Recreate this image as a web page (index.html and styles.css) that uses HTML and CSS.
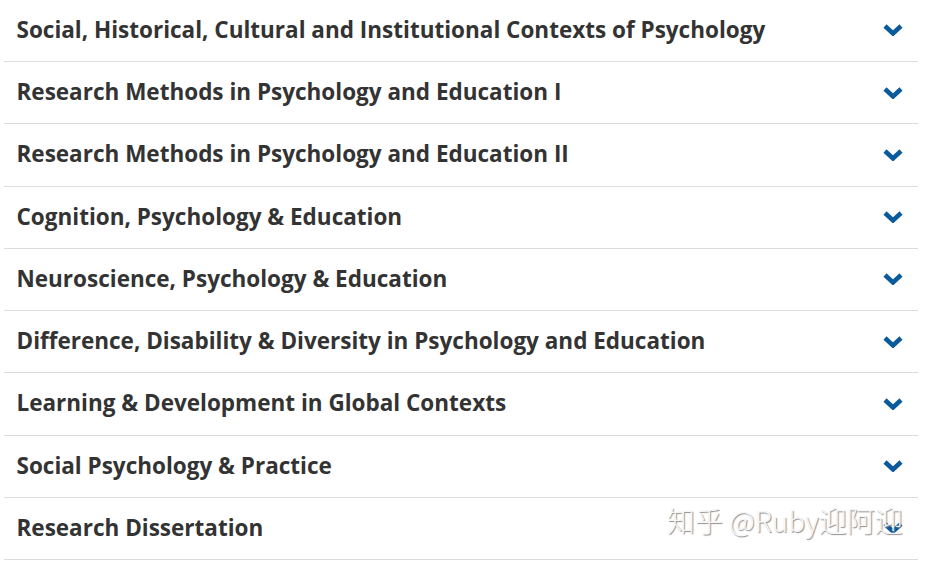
FILE: index.html
```html
<!DOCTYPE html>
<html lang="en">
<head>
<meta charset="utf-8">
<link rel="stylesheet" href="styles.css">
</head>
<body>
<ul class="accordion">
  <li class="row"><span class="title">Social, Historical, Cultural and Institutional Contexts of Psychology</span><svg class="chev" viewBox="0 0 20 12"><polyline points="2,2 10,9.5 18,2"/></svg></li>
  <li class="row"><span class="title">Research Methods in Psychology and Education I</span><svg class="chev" viewBox="0 0 20 12"><polyline points="2,2 10,9.5 18,2"/></svg></li>
  <li class="row"><span class="title">Research Methods in Psychology and Education II</span><svg class="chev" viewBox="0 0 20 12"><polyline points="2,2 10,9.5 18,2"/></svg></li>
  <li class="row"><span class="title">Cognition, Psychology &amp; Education</span><svg class="chev" viewBox="0 0 20 12"><polyline points="2,2 10,9.5 18,2"/></svg></li>
  <li class="row"><span class="title">Neuroscience, Psychology &amp; Education</span><svg class="chev" viewBox="0 0 20 12"><polyline points="2,2 10,9.5 18,2"/></svg></li>
  <li class="row"><span class="title">Difference, Disability &amp; Diversity in Psychology and Education</span><svg class="chev" viewBox="0 0 20 12"><polyline points="2,2 10,9.5 18,2"/></svg></li>
  <li class="row"><span class="title">Learning &amp; Development in Global Contexts</span><svg class="chev" viewBox="0 0 20 12"><polyline points="2,2 10,9.5 18,2"/></svg></li>
  <li class="row"><span class="title">Social Psychology &amp; Practice</span><svg class="chev" viewBox="0 0 20 12"><polyline points="2,2 10,9.5 18,2"/></svg></li>
  <li class="row"><span class="title">Research Dissertation</span><svg class="chev" viewBox="0 0 20 12"><polyline points="2,2 10,9.5 18,2"/></svg></li>
</ul>
<div class="watermark">知乎 @Ruby迎阿迎</div>
</body>
</html>
```
FILE: styles.css
```css
html, body {
  margin: 0;
  padding: 0;
  background: #ffffff;
}
body {
  position: relative;
  width: 928px;
  height: 563px;
  overflow: hidden;
  font-family: "Open Sans", "Noto Sans", sans-serif;
}
.accordion {
  list-style: none;
  margin: -0.25px 0 0 4px;
  padding: 0;
  width: 914px;
}
.row {
  box-sizing: border-box;
  height: 62.25px;
  display: flex;
  align-items: center;
  justify-content: space-between;
  padding: 0 15px 0 12.5px;
  border-bottom: 1px solid #dcdcdc;
}
.title {
  font-size: 22.5px;
  font-weight: 700;
  color: #333333;
  margin-bottom: 2px;
}
.chev {
  width: 20px;
  height: 12px;
  fill: none;
  stroke: #0b5a9c;
  stroke-width: 4.5;
  stroke-linecap: butt;
  stroke-linejoin: miter;
}
.watermark {
  position: absolute;
  left: 667px;
  top: 500px;
  font-family: "Noto Sans CJK SC", "Noto Sans", sans-serif;
  font-size: 28px;
  font-weight: 300;
  color: #f6f6f6;
  text-shadow: 1px 1px 1px #8c8c8c;
  white-space: nowrap;
}
```
